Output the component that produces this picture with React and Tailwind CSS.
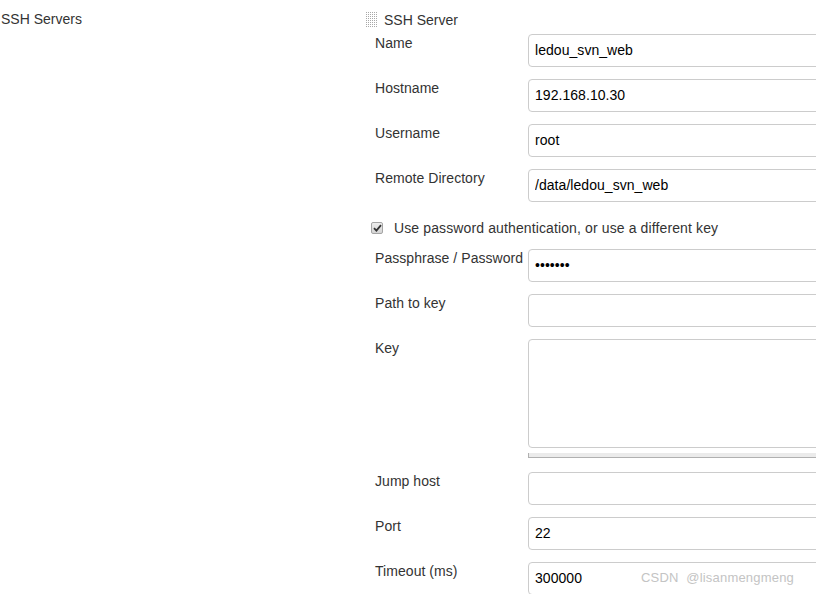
import React from "react";

const font = { fontFamily: '"Liberation Sans", Arial, sans-serif' };

function Grip() {
  const dots = [];
  for (let r = 0; r < 8; r++) {
    for (let c = 0; c < 6; c++) {
      dots.push(<rect key={r + "-" + c} x={c * 2} y={r * 2} width="1" height="1" fill="#a8a8a8" />);
    }
  }
  return (
    <svg width="12" height="16" viewBox="0 0 12 16" className="shrink-0">
      {dots}
    </svg>
  );
}

function Field({ label, value, type = "text", className = "" }) {
  return (
    <div className={"flex items-start " + className}>
      <div className="w-[153px] shrink-0 text-[14px] leading-[20px] text-[#333] -mt-px tracking-[0.05px]">{label}</div>
      <input
        type={type}
        defaultValue={value}
        readOnly
        className="w-[320px] shrink-0 h-[33px] border border-[#ccc] rounded-[4px] px-[6px] pb-px text-[14px] text-black bg-white outline-none tracking-[0.05px]"
        style={font}
      />
    </div>
  );
}

export default function App() {
  return (
    <div className="w-[816px] h-[594px] overflow-hidden bg-white relative" style={font}>
      <div className="flex">
        <div className="w-[366px] shrink-0 pl-[1px] pt-[9px] text-[14px] leading-[20px] text-[#333]">SSH Servers</div>
        <div className="flex flex-col">
          <div className="flex items-center gap-[6px] pt-[10px] h-[30px]">
            <Grip />
            <span className="text-[14px] leading-[20px] text-[#333]">SSH Server</span>
          </div>
          <div className="pl-[9px] pt-[4px] flex flex-col">
            <Field label="Name" value="ledou_svn_web" />
            <Field label="Hostname" value="192.168.10.30" className="mt-[12px]" />
            <Field label="Username" value="root" className="mt-[12px]" />
            <Field label="Remote Directory" value="/data/ledou_svn_web" className="mt-[12px]" />

            <div className="flex items-center gap-[11px] mt-[16px] h-[20px] -ml-[4px]">
              <span className="w-[12px] h-[12px] rounded-[2px] border border-[#a5a5a5] bg-gradient-to-b from-[#ededed] to-[#d4d4d4] flex items-center justify-center">
                <svg width="9" height="8" viewBox="0 0 9 8">
                  <path d="M1 4.2 L3.4 6.6 L8 1.2" stroke="#333" strokeWidth="1.8" fill="none" />
                </svg>
              </span>
              <span className="text-[14px] leading-[20px] text-[#333] tracking-[0.12px]">Use password authentication, or use a different key</span>
            </div>

            <Field label="Passphrase / Password" value="1234567" type="password" className="mt-[11px]" />
            <Field label="Path to key" value="" className="mt-[12px]" />

            <div className="flex items-start mt-[12px]">
              <div className="w-[153px] shrink-0 text-[14px] leading-[20px] text-[#333] -mt-px">Key</div>
              <div className="flex flex-col w-[320px] shrink-0">
                <textarea
                  readOnly
                  className="h-[109px] border border-[#ccc] rounded-[4px] bg-white resize-none outline-none"
                />
                <div className="mt-[5px] h-[5px] bg-[#ebebeb] border-l border-b border-[#b0b0b0]" />
              </div>
            </div>

            <Field label="Jump host" value="" className="mt-[14px]" />
            <Field label="Port" value="22" className="mt-[12px]" />
            <Field label="Timeout (ms)" value="300000" className="mt-[12px]" />
          </div>
        </div>
      </div>
      <div className="absolute left-[641px] top-[569px] text-[13px] leading-[18px] text-[#c4c4c4] tracking-[0.2px] whitespace-pre">
        CSDN  @lisanmengmeng
      </div>
    </div>
  );
}
